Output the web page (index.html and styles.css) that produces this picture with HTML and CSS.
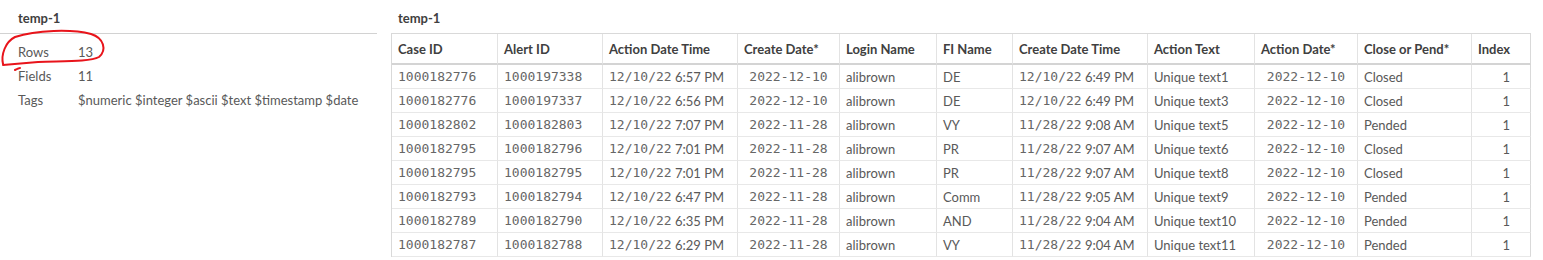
FILE: index.html
```html
<!DOCTYPE html>
<html lang="en">
<head>
<meta charset="utf-8">
<title>temp-1</title>
<link rel="stylesheet" href="styles.css">
</head>
<body>
<div class="page">
  <section class="meta-panel">
    <h2 class="panel-title">temp-1</h2>
    <dl class="meta">
      <dt>Rows</dt><dd>13</dd>
      <dt>Fields</dt><dd>11</dd>
      <dt>Tags</dt><dd>$numeric $integer $ascii $text $timestamp $date</dd>
    </dl>
    <svg class="annotation" width="120" height="80" viewBox="0 0 120 80">
      <path d="M15 70 C 17 69, 19 68, 20 68 M 3 64 C 1 55, 5 42, 15 37 C 36 30, 72 29, 91 34 C 104 38, 107 50, 99 57 C 90 62, 62 61, 38 62 C 26 63, 14 64, 3 65" fill="none" stroke="#e8141b" stroke-width="2" stroke-linecap="round"/>
    </svg>
  </section>
  <section class="table-panel">
    <h2 class="table-title">temp-1</h2>
    <div class="grid">
      <div class="th">Case ID</div>
      <div class="th">Alert ID</div>
      <div class="th">Action Date Time</div>
      <div class="th">Create Date*</div>
      <div class="th">Login Name</div>
      <div class="th">FI Name</div>
      <div class="th">Create Date Time</div>
      <div class="th">Action Text</div>
      <div class="th">Action Date*</div>
      <div class="th">Close or Pend*</div>
      <div class="th">Index</div>

      <div class="td mono">1000182776</div><div class="td mono">1000197338</div><div class="td"><span class="mono">12/10/22</span>&nbsp;6:57 PM</div><div class="td mono center">2022-12-10</div><div class="td">alibrown</div><div class="td">DE</div><div class="td"><span class="mono">12/10/22</span>&nbsp;6:49 PM</div><div class="td">Unique text1</div><div class="td mono center">2022-12-10</div><div class="td">Closed</div><div class="td right">1</div>

      <div class="td mono">1000182776</div><div class="td mono">1000197337</div><div class="td"><span class="mono">12/10/22</span>&nbsp;6:56 PM</div><div class="td mono center">2022-12-10</div><div class="td">alibrown</div><div class="td">DE</div><div class="td"><span class="mono">12/10/22</span>&nbsp;6:49 PM</div><div class="td">Unique text3</div><div class="td mono center">2022-12-10</div><div class="td">Closed</div><div class="td right">1</div>

      <div class="td mono">1000182802</div><div class="td mono">1000182803</div><div class="td"><span class="mono">12/10/22</span>&nbsp;7:07 PM</div><div class="td mono center">2022-11-28</div><div class="td">alibrown</div><div class="td">VY</div><div class="td"><span class="mono">11/28/22</span>&nbsp;9:08 AM</div><div class="td">Unique text5</div><div class="td mono center">2022-12-10</div><div class="td">Pended</div><div class="td right">1</div>

      <div class="td mono">1000182795</div><div class="td mono">1000182796</div><div class="td"><span class="mono">12/10/22</span>&nbsp;7:01 PM</div><div class="td mono center">2022-11-28</div><div class="td">alibrown</div><div class="td">PR</div><div class="td"><span class="mono">11/28/22</span>&nbsp;9:07 AM</div><div class="td">Unique text6</div><div class="td mono center">2022-12-10</div><div class="td">Closed</div><div class="td right">1</div>

      <div class="td mono">1000182795</div><div class="td mono">1000182795</div><div class="td"><span class="mono">12/10/22</span>&nbsp;7:01 PM</div><div class="td mono center">2022-11-28</div><div class="td">alibrown</div><div class="td">PR</div><div class="td"><span class="mono">11/28/22</span>&nbsp;9:07 AM</div><div class="td">Unique text8</div><div class="td mono center">2022-12-10</div><div class="td">Closed</div><div class="td right">1</div>

      <div class="td mono">1000182793</div><div class="td mono">1000182794</div><div class="td"><span class="mono">12/10/22</span>&nbsp;6:47 PM</div><div class="td mono center">2022-11-28</div><div class="td">alibrown</div><div class="td">Comm</div><div class="td"><span class="mono">11/28/22</span>&nbsp;9:05 AM</div><div class="td">Unique text9</div><div class="td mono center">2022-12-10</div><div class="td">Pended</div><div class="td right">1</div>

      <div class="td mono">1000182789</div><div class="td mono">1000182790</div><div class="td"><span class="mono">12/10/22</span>&nbsp;6:35 PM</div><div class="td mono center">2022-11-28</div><div class="td">alibrown</div><div class="td">AND</div><div class="td"><span class="mono">11/28/22</span>&nbsp;9:04 AM</div><div class="td">Unique text10</div><div class="td mono center">2022-12-10</div><div class="td">Pended</div><div class="td right">1</div>

      <div class="td mono">1000182787</div><div class="td mono">1000182788</div><div class="td"><span class="mono">12/10/22</span>&nbsp;6:29 PM</div><div class="td mono center">2022-11-28</div><div class="td">alibrown</div><div class="td">VY</div><div class="td"><span class="mono">11/28/22</span>&nbsp;9:04 AM</div><div class="td">Unique text11</div><div class="td mono center">2022-12-10</div><div class="td">Pended</div><div class="td right">1</div>
    </div>
  </section>
</div>
</body>
</html>
```
FILE: styles.css
```css
html, body {
  margin: 0;
  padding: 0;
  background: #ffffff;
  overflow: hidden;
}

body {
  font-family: Lato, "Open Sans", sans-serif;
  font-size: 13px;
  color: #595959;
}

.page {
  display: flex;
  align-items: flex-start;
}

.meta-panel {
  position: relative;
  width: 377px;
  flex: none;
}

.panel-title,
.table-title {
  margin: 0;
  box-sizing: border-box;
  height: 33px;
  padding-top: 10px;
  font-size: 13px;
  line-height: 16px;
  font-weight: 700;
  color: #404040;
}

.panel-title {
  height: 34px;
  padding-left: 18px;
  border-bottom: 1px solid #d2d2d2;
}

.table-title {
  padding-left: 7px;
}

.meta {
  margin: 0;
  padding: 6px 0 0 18px;
  display: grid;
  grid-template-columns: 60px auto;
  grid-auto-rows: 24px;
  align-items: center;
}

.meta dt,
.meta dd {
  margin: 0;
  line-height: 16px;
  white-space: nowrap;
}

.annotation {
  position: absolute;
  left: 0;
  top: 0;
  pointer-events: none;
}

.table-panel {
  margin-left: 14px;
  flex: none;
}

.grid {
  display: grid;
  grid-template-columns: 106px 105px 135px 102px 97px 76px 135px 107px 103px 114px 59px;
  width: max-content;
  border-top: 1px solid #d9d9d9;
  border-left: 1px solid #d9d9d9;
}

.th,
.td {
  box-sizing: border-box;
  display: flex;
  align-items: center;
  padding: 0 6px;
  border-right: 1px solid #e3e3e3;
  white-space: nowrap;
  overflow: hidden;
}

.th {
  height: 31px;
  font-weight: 700;
  color: #404040;
  border-bottom: 2px solid #d4d4d4;
}

.td {
  height: 24px;
  border-bottom: 1px solid #e8e8e8;
}

.th:nth-child(11n),
.td:nth-child(11n) {
  border-right-color: #d9d9d9;
}

.mono {
  font-family: "DejaVu Sans Mono", "Liberation Mono", monospace;
  font-size: 13px;
  color: #666666;
}

.center {
  justify-content: center;
}

.right {
  justify-content: flex-end;
  padding-right: 20px;
}
```
